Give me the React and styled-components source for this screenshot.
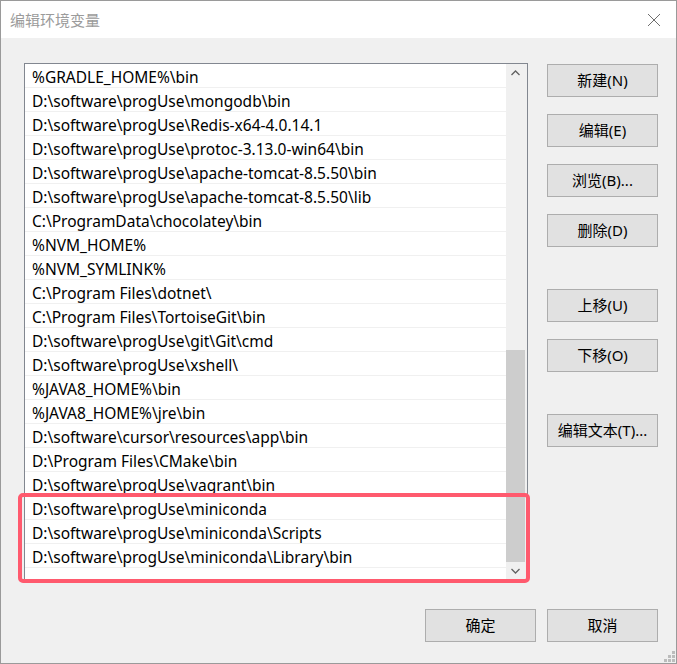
import React from "react";
import styled, { createGlobalStyle } from "styled-components";

const GlobalStyle = createGlobalStyle`
  html, body {
    margin: 0;
    padding: 0;
    background: #ffffff;
  }
  * {
    box-sizing: border-box;
  }
`;

const paths = [
  "%GRADLE_HOME%\\bin",
  "D:\\software\\progUse\\mongodb\\bin",
  "D:\\software\\progUse\\Redis-x64-4.0.14.1",
  "D:\\software\\progUse\\protoc-3.13.0-win64\\bin",
  "D:\\software\\progUse\\apache-tomcat-8.5.50\\bin",
  "D:\\software\\progUse\\apache-tomcat-8.5.50\\lib",
  "C:\\ProgramData\\chocolatey\\bin",
  "%NVM_HOME%",
  "%NVM_SYMLINK%",
  "C:\\Program Files\\dotnet\\",
  "C:\\Program Files\\TortoiseGit\\bin",
  "D:\\software\\progUse\\git\\Git\\cmd",
  "D:\\software\\progUse\\xshell\\",
  "%JAVA8_HOME%\\bin",
  "%JAVA8_HOME%\\jre\\bin",
  "D:\\software\\cursor\\resources\\app\\bin",
  "D:\\Program Files\\CMake\\bin",
  "D:\\software\\progUse\\vagrant\\bin",
  "D:\\software\\progUse\\miniconda",
  "D:\\software\\progUse\\miniconda\\Scripts",
  "D:\\software\\progUse\\miniconda\\Library\\bin",
  "",
];

const sideButtons = [
  { label: "新建(N)", gap: 0 },
  { label: "编辑(E)", gap: 17 },
  { label: "浏览(B)...", gap: 17 },
  { label: "删除(D)", gap: 17 },
  { label: "上移(U)", gap: 42 },
  { label: "下移(O)", gap: 17 },
  { label: "编辑文本(T)...", gap: 42 },
];

export default function App() {
  return (
    <>
      <GlobalStyle />
      <Window>
        <TitleBar>
          <Title>编辑环境变量</Title>
          <CloseIcon width="14" height="14" viewBox="0 0 14 14">
            <path d="M1 1 L13 13 M13 1 L1 13" stroke="#6e6e6e" strokeWidth="1" fill="none" />
          </CloseIcon>
        </TitleBar>
        <Body>
          <Main>
            <ListBox>
              <Rows>
                {paths.map((p, i) => (
                  <Row key={i}>{p}</Row>
                ))}
              </Rows>
              <ScrollBar>
                <Arrow>
                  <svg width="9" height="6" viewBox="0 0 9 6">
                    <path d="M0.5 5 L4.5 1 L8.5 5" stroke="#606060" strokeWidth="1.3" fill="none" />
                  </svg>
                </Arrow>
                <Track>
                  <Thumb $height={212} />
                </Track>
                <Arrow>
                  <svg width="9" height="6" viewBox="0 0 9 6">
                    <path d="M0.5 1 L4.5 5 L8.5 1" stroke="#606060" strokeWidth="1.3" fill="none" />
                  </svg>
                </Arrow>
              </ScrollBar>
            </ListBox>
            <ButtonColumn>
              {sideButtons.map((b) => (
                <Button key={b.label} $gap={b.gap}>
                  {b.label}
                </Button>
              ))}
            </ButtonColumn>
          </Main>
          <Footer>
            <Button>确定</Button>
            <Button>取消</Button>
          </Footer>
        </Body>
        <Highlight />
        <Grip width="14" height="12" viewBox="0 0 14 12">
          <rect x="10" y="0" width="3" height="3" fill="#bcbcbc" />
          <rect x="6" y="4" width="3" height="3" fill="#bcbcbc" />
          <rect x="10" y="4" width="3" height="3" fill="#bcbcbc" />
          <rect x="2" y="8" width="3" height="3" fill="#bcbcbc" />
          <rect x="6" y="8" width="3" height="3" fill="#bcbcbc" />
          <rect x="10" y="8" width="3" height="3" fill="#bcbcbc" />
        </Grip>
      </Window>
    </>
  );
}

const Window = styled.div`
  position: relative;
  width: 677px;
  height: 664px;
  display: flex;
  flex-direction: column;
  border: 1px solid #9a9a9a;
  background: #f0f0f0;
  font-family: "Noto Sans", "Noto Sans CJK SC", sans-serif;
  overflow: hidden;
`;

const TitleBar = styled.div`
  height: 37px;
  flex-shrink: 0;
  background: #ffffff;
  display: flex;
  align-items: center;
  justify-content: space-between;
  padding: 0 15px 0 9px;
`;

const Title = styled.span`
  font-family: "Noto Sans CJK SC", sans-serif;
  font-size: 15px;
  color: #9b9b9b;
`;

const CloseIcon = styled.svg`
  display: block;
`;

const Body = styled.div`
  flex: 1;
  display: flex;
  flex-direction: column;
  padding: 25px 18px 0 23px;
`;

const Main = styled.div`
  display: flex;
  gap: 19px;
`;

const ListBox = styled.div`
  width: 504px;
  height: 517px;
  border: 1px solid #828790;
  background: #ffffff;
  display: flex;
  overflow: hidden;
`;

const Rows = styled.div`
  flex: 1;
  display: flex;
  flex-direction: column;
  overflow: hidden;
`;

const Row = styled.div`
  height: 24px;
  flex-shrink: 0;
  border-bottom: 1px solid #f0f0f0;
  padding: 2px 0 0 7px;
  display: flex;
  align-items: center;
  font-size: 15.5px;
  color: #000000;
  white-space: nowrap;
`;

const ScrollBar = styled.div`
  width: 21px;
  background: #f0f0f0;
  display: flex;
  flex-direction: column;
`;

const Arrow = styled.div`
  height: 17px;
  display: flex;
  align-items: center;
  justify-content: center;
  padding-right: 2px;
`;

const Track = styled.div`
  flex: 1;
  display: flex;
  flex-direction: column;
  justify-content: flex-end;
`;

const Thumb = styled.div`
  height: ${(p) => p.$height}px;
  width: 19px;
  background: #cdcdcd;
`;

const ButtonColumn = styled.div`
  display: flex;
  flex-direction: column;
  padding-top: 1px;
`;

const Button = styled.div`
  width: 111px;
  height: 33px;
  margin-top: ${(p) => p.$gap || 0}px;
  border: 1px solid #adadad;
  background: #e1e1e1;
  display: flex;
  align-items: center;
  justify-content: center;
  padding-bottom: 2px;
  font-family: "Noto Sans", "Noto Sans CJK SC", sans-serif;
  font-size: 15px;
  color: #000000;
`;

const Footer = styled.div`
  display: flex;
  justify-content: flex-end;
  gap: 11px;
  margin-top: 29px;
`;

const Highlight = styled.div`
  position: absolute;
  left: 17px;
  top: 492px;
  width: 512px;
  height: 90px;
  border: 4px solid #ff5a6e;
  border-radius: 5px;
  pointer-events: none;
`;

const Grip = styled.svg`
  position: absolute;
  right: 0px;
  bottom: 0px;
`;
